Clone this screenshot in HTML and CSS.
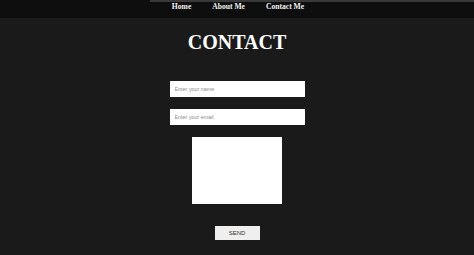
FILE: index.html
```html
<!DOCTYPE html>
<html>
<head>
<meta charset="utf-8">
<link rel="stylesheet" href="styles.css">
</head>
<body>
<header class="header">
  <div class="topline"></div>
  <nav class="nav">
    <a class="nav-link" href="#">Home</a>
    <a class="nav-link" href="#">About Me</a>
    <a class="nav-link" href="#">Contact Me</a>
  </nav>
</header>
<main class="main">
  <h1 class="title">CONTACT</h1>
  <form class="form">
    <input class="field" type="text" placeholder="Enter your name">
    <input class="field" type="email" placeholder="Enter your email">
    <textarea class="message"></textarea>
    <button class="send" type="button">SEND</button>
  </form>
</main>
</body>
</html>
```
FILE: styles.css
```css
html, body {
  margin: 0;
  padding: 0;
  background: #1a1a1a;
  height: 100%;
}
body {
  font-family: "Liberation Serif", serif;
}
.header {
  background: #0e0e0e;
  height: 18px;
  display: flex;
  flex-direction: column;
}
.topline {
  height: 2px;
  margin-left: 150px;
  background: #3a3a3a;
}
.nav {
  display: flex;
  justify-content: center;
  gap: 21px;
  padding-left: 2px;
  margin-top: -1px;
}
.nav-link {
  color: #f2f2f2;
  text-decoration: none;
  font-weight: bold;
  font-size: 7.6px;
  line-height: 12px;
}
.main {
  display: flex;
  flex-direction: column;
  align-items: center;
}
.title {
  margin: 12px 0 0 0;
  color: #ffffff;
  font-size: 20px;
  line-height: 24px;
  font-weight: bold;
  letter-spacing: 0;
}
.form {
  display: flex;
  flex-direction: column;
  align-items: center;
  margin-top: 27px;
}
.field {
  box-sizing: border-box;
  width: 135px;
  height: 16px;
  border: none;
  background: #ffffff;
  padding: 0 5px;
  font-family: "Liberation Sans", sans-serif;
  font-size: 5.4px;
  margin: 0 0 12px 0;
  outline: none;
}
.field::placeholder {
  color: #8a8a8a;
}
.message {
  box-sizing: border-box;
  width: 90px;
  height: 67px;
  border: none;
  background: #ffffff;
  margin: 0;
  resize: none;
}
.send {
  box-sizing: border-box;
  width: 45px;
  height: 14px;
  margin-top: 22px;
  border: none;
  background: #efefef;
  color: #333;
  font-family: "Liberation Sans", sans-serif;
  font-size: 6px;
  padding: 0;
}
```
